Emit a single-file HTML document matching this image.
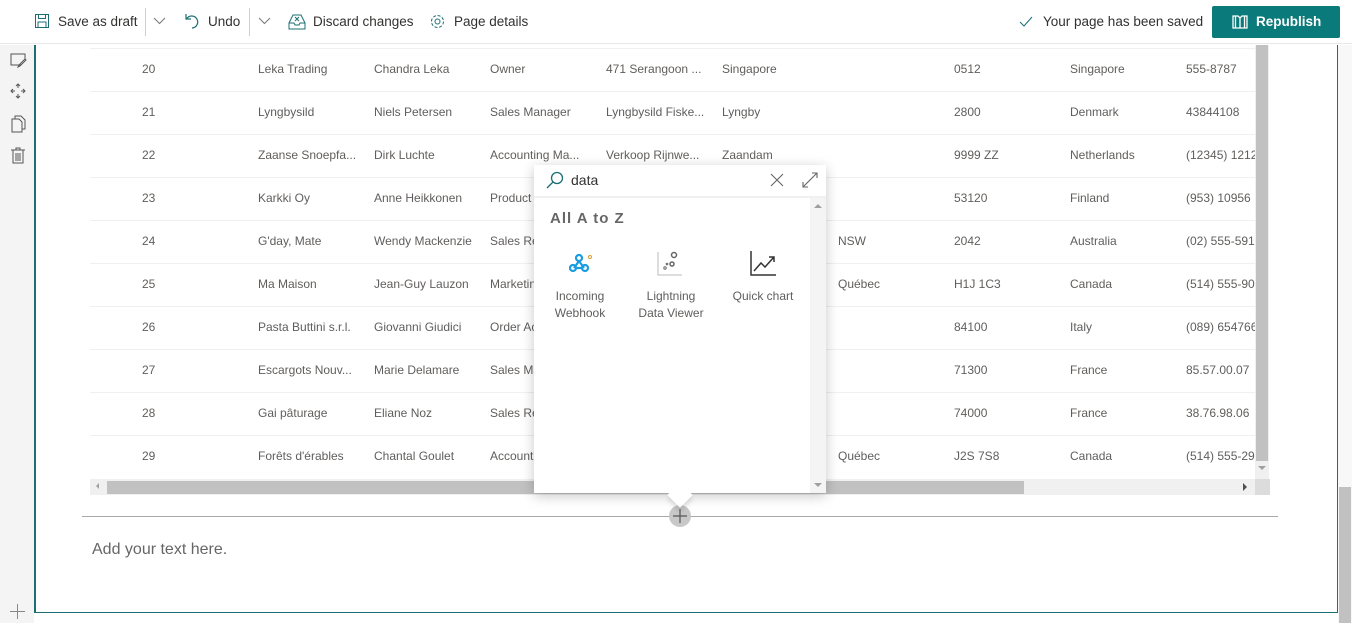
<!DOCTYPE html>
<html><head><meta charset="utf-8"><style>
*{box-sizing:border-box;margin:0;padding:0}
body{width:1352px;height:623px;overflow:hidden;background:#fff;font-family:"Liberation Sans",sans-serif;position:relative;color:#323130}
.abs{position:absolute}
.top{left:0;top:0;width:1352px;height:44px;background:#fff;border-bottom:1px solid #e8e8e8}
.tb{position:absolute;top:14px;font-size:13.5px;color:#323130;white-space:nowrap}
.side{left:0;top:45px;width:34px;height:578px;background:#f4f4f4}
.sec{left:34px;top:45px;width:1304px;height:568px;border-left:2px solid #1b6f73;border-right:1px solid #1b6f73;border-bottom:1px solid #1b6f73}
.cell{position:absolute;font-size:12px;color:#605e5c;white-space:nowrap}
.row{position:absolute;left:90px;width:1165px;height:1px;background:#f0f0f0}
</style></head><body>
<div class="abs top"></div>
<svg class="abs" style="left:34px;top:13px" width="16" height="16" viewBox="0 0 16 16" fill="none" stroke="#1b6f73" stroke-width="1"><rect x="1.5" y="1.5" width="13" height="13"/><rect x="4.5" y="1.5" width="7" height="4"/><rect x="4" y="9" width="8" height="5.5"/></svg>
<div class="tb" style="left:58px">Save as draft</div>
<div class="abs" style="left:145px;top:8px;width:1px;height:28px;background:#d0d0d0"></div>
<svg class="abs" style="left:153px;top:17px" width="13" height="8" viewBox="0 0 13 8" fill="none" stroke="#777"><path d="M1 1l5.5 5.5L12 1"/></svg>
<svg class="abs" style="left:184px;top:12px" width="16" height="18" viewBox="0 0 16 18" fill="none" stroke="#1b6f73" stroke-width="1.2"><path d="M2 2v5h5"/><path d="M2.5 7A6 6 0 1 1 8 16"/></svg>
<div class="tb" style="left:208px">Undo</div>
<div class="abs" style="left:249px;top:8px;width:1px;height:28px;background:#d0d0d0"></div>
<svg class="abs" style="left:258px;top:17px" width="13" height="8" viewBox="0 0 13 8" fill="none" stroke="#777"><path d="M1 1l5.5 5.5L12 1"/></svg>
<svg class="abs" style="left:288px;top:13px" width="18" height="17" viewBox="0 0 18 17" fill="none" stroke="#1b6f73" stroke-width="1"><path d="M1 10L5 2h8l4 8v6H1z"/><path d="M1 10h5l1 2h4l1-2h5"/><path d="M7 4l4 4M11 4l-4 4"/></svg>
<div class="tb" style="left:313px">Discard changes</div>
<svg class="abs" style="left:429px;top:13px" width="17" height="17" viewBox="0 0 17 17" fill="none" stroke="#1b6f73" stroke-width="1"><circle cx="8.5" cy="8.5" r="2.5"/><circle cx="8.5" cy="8.5" r="6" stroke-dasharray="3 1.7"/></svg>
<div class="tb" style="left:454px">Page details</div>
<svg class="abs" style="left:1019px;top:16px" width="14" height="11" viewBox="0 0 14 11" fill="none" stroke="#1b6f73"><path d="M1 6l4 4 8-9"/></svg>
<div class="tb" style="left:1043px">Your page has been saved</div>
<div class="abs" style="left:1212px;top:6px;width:128px;height:32px;background:#0b7a7a;border-radius:2px;color:#fff;font-weight:bold;font-size:13.5px;line-height:32px;padding-left:44px">Republish</div>
<svg class="abs" style="left:1232px;top:15px" width="16" height="14" viewBox="0 0 16 14" fill="none" stroke="#fff" stroke-width="1.3"><path d="M1 1h5l2 2 2-2h5v12H1z M8 3v10 M3.5 1v12 M12.5 1v12"/></svg>

<div class="abs side"></div>
<svg class="abs" style="left:10px;top:53px" width="17" height="15" viewBox="0 0 17 15" fill="none" stroke="#555"><path d="M11 12H1V1h14v5"/><path d="M16 7l-6 6-2 1 1-2 6-6z"/></svg>
<svg class="abs" style="left:10px;top:83px" width="16" height="16" viewBox="0 0 16 16" fill="none" stroke="#555"><path d="M8 1v4M8 11v4M1 8h4M11 8h4M6 3l2-2 2 2M6 13l2 2 2-2M3 6L1 8l2 2M13 6l2 2-2 2"/></svg>
<svg class="abs" style="left:11px;top:115px" width="15" height="18" viewBox="0 0 15 18" fill="none" stroke="#555"><path d="M4 4V1h6l4 4v9h-3"/><path d="M1 4h7l3 3v10H1z"/></svg>
<svg class="abs" style="left:11px;top:147px" width="14" height="17" viewBox="0 0 14 17" fill="none" stroke="#555"><path d="M0 3h14M5 3V1h4v2M2 3v13h10V3M5 6v8M7 6v8M9 6v8"/></svg>
<svg class="abs" style="left:10px;top:604px" width="15" height="15" viewBox="0 0 15 15" stroke="#888"><path d="M7.5 0v15M0 7.5h15"/></svg>

<div class="abs sec"></div>
<div class="abs" style="left:1338px;top:45px;width:14px;height:578px;background:#f8f8f8"></div>
<div class="abs" style="left:1339px;top:487px;width:12px;height:136px;background:#c1c1c1"></div>

<div class="abs" style="left:90px;top:45px;width:1165px;height:434px;overflow:hidden">
<div style="position:relative;left:-90px;top:-45px">
<div class="cell" style="left:142px;top:62px">20</div><div class="cell" style="left:258px;top:62px">Leka Trading</div><div class="cell" style="left:374px;top:62px">Chandra Leka</div><div class="cell" style="left:490px;top:62px">Owner</div><div class="cell" style="left:606px;top:62px">471 Serangoon ...</div><div class="cell" style="left:722px;top:62px">Singapore</div><div class="cell" style="left:954px;top:62px">0512</div><div class="cell" style="left:1070px;top:62px">Singapore</div><div class="cell" style="left:1186px;top:62px">555-8787</div>
<div class="row" style="top:91px"></div>
<div class="cell" style="left:142px;top:105px">21</div><div class="cell" style="left:258px;top:105px">Lyngbysild</div><div class="cell" style="left:374px;top:105px">Niels Petersen</div><div class="cell" style="left:490px;top:105px">Sales Manager</div><div class="cell" style="left:606px;top:105px">Lyngbysild Fiske...</div><div class="cell" style="left:722px;top:105px">Lyngby</div><div class="cell" style="left:954px;top:105px">2800</div><div class="cell" style="left:1070px;top:105px">Denmark</div><div class="cell" style="left:1186px;top:105px">43844108</div>
<div class="row" style="top:134px"></div>
<div class="cell" style="left:142px;top:148px">22</div><div class="cell" style="left:258px;top:148px">Zaanse Snoepfa...</div><div class="cell" style="left:374px;top:148px">Dirk Luchte</div><div class="cell" style="left:490px;top:148px">Accounting Ma...</div><div class="cell" style="left:606px;top:148px">Verkoop Rijnwe...</div><div class="cell" style="left:722px;top:148px">Zaandam</div><div class="cell" style="left:954px;top:148px">9999 ZZ</div><div class="cell" style="left:1070px;top:148px">Netherlands</div><div class="cell" style="left:1186px;top:148px">(12345) 1212</div>
<div class="row" style="top:177px"></div>
<div class="cell" style="left:142px;top:191px">23</div><div class="cell" style="left:258px;top:191px">Karkki Oy</div><div class="cell" style="left:374px;top:191px">Anne Heikkonen</div><div class="cell" style="left:490px;top:191px">Product</div><div class="cell" style="left:954px;top:191px">53120</div><div class="cell" style="left:1070px;top:191px">Finland</div><div class="cell" style="left:1186px;top:191px">(953) 10956</div>
<div class="row" style="top:220px"></div>
<div class="cell" style="left:142px;top:234px">24</div><div class="cell" style="left:258px;top:234px">G'day, Mate</div><div class="cell" style="left:374px;top:234px">Wendy Mackenzie</div><div class="cell" style="left:490px;top:234px">Sales Re</div><div class="cell" style="left:838px;top:234px">NSW</div><div class="cell" style="left:954px;top:234px">2042</div><div class="cell" style="left:1070px;top:234px">Australia</div><div class="cell" style="left:1186px;top:234px">(02) 555-591</div>
<div class="row" style="top:263px"></div>
<div class="cell" style="left:142px;top:277px">25</div><div class="cell" style="left:258px;top:277px">Ma Maison</div><div class="cell" style="left:374px;top:277px">Jean-Guy Lauzon</div><div class="cell" style="left:490px;top:277px">Marketin</div><div class="cell" style="left:838px;top:277px">Québec</div><div class="cell" style="left:954px;top:277px">H1J 1C3</div><div class="cell" style="left:1070px;top:277px">Canada</div><div class="cell" style="left:1186px;top:277px">(514) 555-90</div>
<div class="row" style="top:306px"></div>
<div class="cell" style="left:142px;top:320px">26</div><div class="cell" style="left:258px;top:320px">Pasta Buttini s.r.l.</div><div class="cell" style="left:374px;top:320px">Giovanni Giudici</div><div class="cell" style="left:490px;top:320px">Order Ac</div><div class="cell" style="left:954px;top:320px">84100</div><div class="cell" style="left:1070px;top:320px">Italy</div><div class="cell" style="left:1186px;top:320px">(089) 654766</div>
<div class="row" style="top:349px"></div>
<div class="cell" style="left:142px;top:363px">27</div><div class="cell" style="left:258px;top:363px">Escargots Nouv...</div><div class="cell" style="left:374px;top:363px">Marie Delamare</div><div class="cell" style="left:490px;top:363px">Sales Ma</div><div class="cell" style="left:954px;top:363px">71300</div><div class="cell" style="left:1070px;top:363px">France</div><div class="cell" style="left:1186px;top:363px">85.57.00.07</div>
<div class="row" style="top:392px"></div>
<div class="cell" style="left:142px;top:406px">28</div><div class="cell" style="left:258px;top:406px">Gai pâturage</div><div class="cell" style="left:374px;top:406px">Eliane Noz</div><div class="cell" style="left:490px;top:406px">Sales Re</div><div class="cell" style="left:954px;top:406px">74000</div><div class="cell" style="left:1070px;top:406px">France</div><div class="cell" style="left:1186px;top:406px">38.76.98.06</div>
<div class="row" style="top:435px"></div>
<div class="cell" style="left:142px;top:449px">29</div><div class="cell" style="left:258px;top:449px">Forêts d'érables</div><div class="cell" style="left:374px;top:449px">Chantal Goulet</div><div class="cell" style="left:490px;top:449px">Account</div><div class="cell" style="left:838px;top:449px">Québec</div><div class="cell" style="left:954px;top:449px">J2S 7S8</div><div class="cell" style="left:1070px;top:449px">Canada</div><div class="cell" style="left:1186px;top:449px">(514) 555-29</div>
<div class="row" style="top:48px"></div>
</div></div>
<div class="abs" style="left:1255px;top:45px;width:14px;height:434px;background:#f0f0f0"></div>
<div class="abs" style="left:1256px;top:45px;width:12px;height:416px;background:#c1c1c1"></div>
<div class="abs" style="left:1258px;top:466px;width:0;height:0;border-left:4px solid transparent;border-right:4px solid transparent;border-top:4px solid #a0a0a0"></div>
<div class="abs" style="left:90px;top:479px;width:1180px;height:16px;background:#f0f0f0"></div>
<div class="abs" style="left:1255px;top:479px;width:15px;height:16px;background:#dcdcdc"></div>
<div class="abs" style="left:107px;top:481px;width:917px;height:13px;background:#c1c1c1"></div>
<div class="abs" style="left:96px;top:483px;border-top:3px solid transparent;border-bottom:3px solid transparent;border-right:3px solid #a0a0a0"></div>
<div class="abs" style="left:1243px;top:483px;border-top:4px solid transparent;border-bottom:4px solid transparent;border-left:4px solid #505050"></div>

<div class="abs" style="left:82px;top:516px;width:1196px;height:1px;background:#a8a8a8"></div>
<div class="abs" style="left:669px;top:505px;width:22px;height:22px;border-radius:50%;background:#c8c8c8"></div>
<svg class="abs" style="left:672px;top:508px" width="16" height="16" viewBox="0 0 16 16" stroke="#555" stroke-width="1.2"><path d="M8 1v14M1 8h14"/></svg>
<div class="abs" style="left:92px;top:541px;font-size:16px;color:#666">Add your text here.</div>

<div class="abs" style="left:534px;top:165px;width:292px;height:328px;background:#fff;box-shadow:0 3px 12px rgba(0,0,0,.22)"></div>
<div class="abs" style="left:671px;top:486px;width:18px;height:18px;background:#fff;transform:rotate(45deg);box-shadow:3px 3px 5px rgba(0,0,0,.12)"></div>
<div class="abs" style="left:660px;top:480px;width:40px;height:13px;background:#fff"></div>
<div class="abs" style="left:534px;top:196px;width:292px;height:2px;background:#f0f0f0"></div>
<svg class="abs" style="left:546px;top:171px" width="18" height="18" viewBox="0 0 18 18" fill="none" stroke="#1b6f73" stroke-width="1.3"><circle cx="11" cy="7" r="5.5"/><path d="M7 11l-6 6"/></svg>
<div class="abs" style="left:571px;top:172px;font-size:14px;color:#323130">data</div>
<svg class="abs" style="left:770px;top:173px" width="14" height="14" viewBox="0 0 14 14" stroke="#666" stroke-width="1.1"><path d="M1 1l12 12M13 1L1 13"/></svg>
<svg class="abs" style="left:802px;top:172px" width="16" height="16" viewBox="0 0 16 16" fill="none" stroke="#666" stroke-width="1.1"><path d="M1 15L15 1M10 1h5v5M1 10v5h5"/></svg>
<div class="abs" style="left:810px;top:198px;width:16px;height:295px;background:#f4f4f4"></div>
<div class="abs" style="left:814px;top:204px;border-left:4px solid transparent;border-right:4px solid transparent;border-bottom:4px solid #a0a0a0"></div>
<div class="abs" style="left:814px;top:483px;border-left:4px solid transparent;border-right:4px solid transparent;border-top:4px solid #a0a0a0"></div>
<div class="abs" style="left:550px;top:210px;font-size:15px;font-weight:bold;color:#666;letter-spacing:1px">All A to Z</div>
<svg class="abs" style="left:569px;top:253px" width="24" height="22" viewBox="0 0 24 22" fill="none" stroke="#1a9de0" stroke-width="2.2"><circle cx="10" cy="5" r="3"/><circle cx="4" cy="15" r="3"/><circle cx="16" cy="15" r="3"/><path d="M10 8l-5 7M7 15h6M10 8l5 7"/><circle cx="21" cy="4" r="1.5" stroke="#d9a030" stroke-width="1"/></svg>
<div class="abs" style="left:546px;top:288px;width:68px;text-align:center;font-size:12px;color:#605e5c;line-height:17px">Incoming Webhook</div>
<svg class="abs" style="left:657px;top:251px" width="26" height="25" viewBox="0 0 26 25" fill="none" stroke="#666" stroke-width="1"><path d="M1 1v23h24" stroke="#bbb"/><circle cx="17" cy="4" r="2.5" stroke-width="1.5"/><circle cx="15" cy="13" r="2" stroke-width="1.5"/><circle cx="8" cy="17" r="1.2"/><circle cx="10" cy="13" r="0.8"/></svg>
<div class="abs" style="left:634px;top:288px;width:74px;text-align:center;font-size:12px;color:#605e5c;line-height:17px">Lightning Data Viewer</div>
<svg class="abs" style="left:750px;top:250px" width="27" height="26" viewBox="0 0 27 26" fill="none" stroke="#333" stroke-width="1.5"><path d="M1 1v24h25"/><path d="M4 21l7-8 4 4 9-10M19 7h5v5"/></svg>
<div class="abs" style="left:728px;top:289px;width:70px;text-align:center;font-size:12px;color:#605e5c">Quick chart</div>
</body></html>
